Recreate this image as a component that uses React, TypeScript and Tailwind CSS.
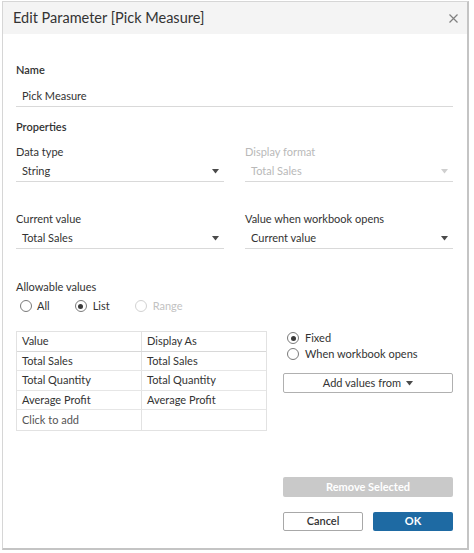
import React from "react";

const font = { fontFamily: "Lato, 'Open Sans', 'Liberation Sans', sans-serif" };

function Caret({ disabled = false }: { disabled?: boolean }) {
  return (
    <svg width="7" height="5" viewBox="0 0 7 5" className="shrink-0">
      <path d="M0 0 L7 0 L3.5 4.5 Z" fill={disabled ? "#cfcfcf" : "#4a4a4a"} />
    </svg>
  );
}

function Radio({ checked = false, disabled = false }: { checked?: boolean; disabled?: boolean }) {
  return (
    <span
      className={`flex h-[12px] w-[12px] shrink-0 items-center justify-center rounded-full border ${
        disabled ? "border-[#d2d2d2]" : "border-[#7a7a7a]"
      } bg-white`}
    >
      {checked && <span className="h-[5px] w-[5px] rounded-full bg-[#3a3a3a]" />}
    </span>
  );
}

function Label({ children, muted = false }: { children: React.ReactNode; muted?: boolean }) {
  return (
    <div className={`flex h-[16px] items-center text-[11px] ${muted ? "text-[#b9b9b9]" : "text-[#333]"}`}>
      {children}
    </div>
  );
}

function Select({ value, disabled = false }: { value: string; disabled?: boolean }) {
  return (
    <div className="mt-[1px] flex h-[21px] items-center justify-between border-b border-[#d9d9d9] pl-[6px] pr-[5px]">
      <span className={`text-[11px] ${disabled ? "text-[#b9b9b9]" : "text-[#333]"}`}>{value}</span>
      <Caret disabled={disabled} />
    </div>
  );
}

const rows = [
  ["Value", "Display As"],
  ["Total Sales", "Total Sales"],
  ["Total Quantity", "Total Quantity"],
  ["Average Profit", "Average Profit"],
  ["Click to add", ""],
];

export default function App() {
  return (
    <div className="h-[553px] w-[474px] overflow-hidden bg-white" style={font}>
      <div className="flex">
        <div className="ml-[2px] mt-[1px] h-[549px] w-[467px] border border-r-2 border-b-2 border-[#d6d6d6] border-r-[#c4c4c4] border-b-[#c4c4c4] bg-white">
          <div className="flex h-[32px] items-center justify-between bg-[#f4f4f4] pl-[10px] pr-[9px]">
            <span className="text-[14.5px] text-[#333]">Edit Parameter [Pick Measure]</span>
            <svg width="9" height="9" viewBox="0 0 9 9">
              <path d="M0.5 0.5 L8.5 8.5 M8.5 0.5 L0.5 8.5" stroke="#808080" strokeWidth="1.2" />
            </svg>
          </div>

          <div className="ml-[13px] w-[437px]">
            <div className="mt-[28px]">
              <Label>
                <span className="font-semibold">Name</span>
              </Label>
            </div>
            <div className="mt-[8px] flex h-[21px] items-center border-b border-[#d9d9d9] pl-[6px] text-[11px] text-[#333]">
              Pick Measure
            </div>
            <div className="mt-[12px]">
              <Label>
                <span className="font-semibold">Properties</span>
              </Label>
            </div>

            <div className="mt-[9px] grid grid-cols-2 gap-x-[21px]">
              <div>
                <Label>Data type</Label>
                <Select value="String" />
              </div>
              <div>
                <Label muted>Display format</Label>
                <Select value="Total Sales" disabled />
              </div>
            </div>

            <div className="mt-[29px] grid grid-cols-2 gap-x-[21px]">
              <div>
                <Label>Current value</Label>
                <Select value="Total Sales" />
              </div>
              <div>
                <Label>Value when workbook opens</Label>
                <Select value="Current value" />
              </div>
            </div>

            <div className="mt-[30px]">
              <Label>Allowable values</Label>
            </div>
            <div className="mt-[3px] flex h-[16px] items-center gap-[25px] pl-[4px] text-[11px]">
              <label className="flex items-center gap-[5px] text-[#333]">
                <Radio />
                All
              </label>
              <label className="flex items-center gap-[6px] text-[#333]">
                <Radio checked />
                List
              </label>
              <label className="flex items-center gap-[6px] text-[#c2c2c2]">
                <Radio disabled />
                Range
              </label>
            </div>

            <div className="mt-[17px] flex h-[99px] items-start">
              <div className="w-[251px] border border-[#e2e2e2] text-[11px] text-[#333]">
                {rows.map((r, i) => (
                  <div
                    key={i}
                    className={`flex h-[19.6px] items-center ${i < rows.length - 1 ? "border-b border-[#e6e6e6]" : ""} ${
                      i === 0 ? "border-b-[#d8d8d8]" : ""
                    }`}
                  >
                    <div className="flex h-full w-[125px] items-center border-r border-[#e2e2e2] pl-[5px]">
                      <span className={i === rows.length - 1 ? "text-[#555]" : ""}>{r[0]}</span>
                    </div>
                    <div className="pl-[5px]">{r[1]}</div>
                  </div>
                ))}
              </div>

              <div className="ml-[16px] flex-1 text-[11px] text-[#333]">
                <label className="mt-[0px] flex h-[14px] items-center gap-[6px] pl-[4px]">
                  <Radio checked />
                  Fixed
                </label>
                <label className="mt-[2px] flex h-[14px] items-center gap-[6px] pl-[4px]">
                  <Radio />
                  When workbook opens
                </label>
                <button className="mt-[12px] flex h-[20px] w-full items-center justify-center gap-[5px] rounded-[2px] border border-[#b0b0b0] bg-white text-[11px] text-[#333]">
                  Add values from
                  <Caret />
                </button>
              </div>
            </div>

            <div className="ml-[267px] w-[170px]">
              <button className="mt-[47px] flex h-[20px] w-full items-center justify-center rounded-[2px] bg-[#c9c9c9] text-[11px] font-bold text-white">
                Remove Selected
              </button>
              <div className="mt-[15px] flex gap-[10px]">
                <button className="flex h-[19px] w-[80px] items-center justify-center rounded-[2px] border border-[#a8a8a8] bg-white text-[11px] font-semibold text-[#333]">
                  Cancel
                </button>
                <button className="flex h-[19px] w-[80px] items-center justify-center rounded-[2px] bg-[#1e6aa3] text-[11px] font-bold text-white">
                  OK
                </button>
              </div>
            </div>
          </div>
        </div>
        <div className="ml-[1px] h-[553px] w-[3px] bg-white" />
      </div>
    </div>
  );
}
